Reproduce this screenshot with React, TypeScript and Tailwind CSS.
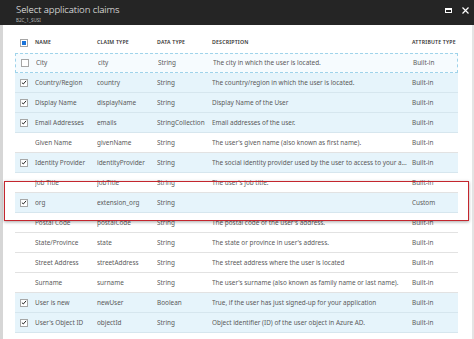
import React from "react";

type Row = { name: string; claim: string; type: string; desc: string; attr: string; checked: boolean; focus?: boolean };

const rows: Row[] = [
  { name: "City", claim: "city", type: "String", desc: "The city in which the user is located.", attr: "Built-in", checked: false, focus: true },
  { name: "Country/Region", claim: "country", type: "String", desc: "The country/region in which the user is located.", attr: "Built-in", checked: true },
  { name: "Display Name", claim: "displayName", type: "String", desc: "Display Name of the User", attr: "Built-in", checked: true },
  { name: "Email Addresses", claim: "emails", type: "StringCollection", desc: "Email addresses of the user.", attr: "Built-in", checked: true },
  { name: "Given Name", claim: "givenName", type: "String", desc: "The user's given name (also known as first name).", attr: "Built-in", checked: false },
  { name: "Identity Provider", claim: "identityProvider", type: "String", desc: "The social identity provider used by the user to access to your a...", attr: "Built-in", checked: true },
  { name: "Job Title", claim: "jobTitle", type: "String", desc: "The user's job title.", attr: "Built-in", checked: false },
  { name: "org", claim: "extension_org", type: "String", desc: "", attr: "Custom", checked: true },
  { name: "Postal Code", claim: "postalCode", type: "String", desc: "The postal code of the user's address.", attr: "Built-in", checked: false },
  { name: "State/Province", claim: "state", type: "String", desc: "The state or province in user's address.", attr: "Built-in", checked: false },
  { name: "Street Address", claim: "streetAddress", type: "String", desc: "The street address where the user is located", attr: "Built-in", checked: false },
  { name: "Surname", claim: "surname", type: "String", desc: "The user's surname (also known as family name or last name).", attr: "Built-in", checked: false },
  { name: "User is new", claim: "newUser", type: "Boolean", desc: "True, if the user has just signed-up for your application", attr: "Built-in", checked: true },
  { name: "User's Object ID", claim: "objectId", type: "String", desc: "Object identifier (ID) of the user object in Azure AD.", attr: "Built-in", checked: true },
];

function Check({ checked }: { checked: boolean }) {
  return (
    <div className="w-[8px] h-[8px] border border-[#a6a6a6] bg-white flex items-center justify-center">
      {checked && (
        <svg width="7" height="7" viewBox="0 0 8 8">
          <polyline points="1.2,4.2 3.1,6 6.8,1.8" fill="none" stroke="#222" strokeWidth="1.3" />
        </svg>
      )}
    </div>
  );
}

export default function App() {
  return (
    <div className="relative w-[474px] h-[339px] overflow-hidden bg-white flex flex-col" style={{ fontFamily: '"Noto Sans", "Open Sans", sans-serif' }}>
      <div className="h-[25px] bg-[#252525] flex items-start justify-between pl-[16px] pr-[5px] shrink-0">
        <div className="flex flex-col pt-[4px]">
          <div className="text-[9.6px] leading-[12px] text-[#f0f0f0] font-light tracking-[-0.1px]">Select application claims</div>
          <div className="text-[4.5px] leading-[6px] text-[#bbbbbb] mt-[1px]">B2C_1_SUSI</div>
        </div>
        <div className="flex items-center gap-[10px] pt-[7px]">
          <div className="w-[7px] h-[5px] border border-white border-t-[2px]" />
          <svg width="7" height="7" viewBox="0 0 7 7">
            <path d="M0.5 0.5 L6.5 6.5 M6.5 0.5 L0.5 6.5" stroke="#fff" strokeWidth="1.2" />
          </svg>
        </div>
      </div>
      <div className="flex flex-1">
        <div className="w-[3px] bg-[#d6d6d6] shrink-0" />
        <div className="flex-1 pl-[12px] pr-[14px] pt-[8px] text-[6.4px] text-[#5a5a5a]">
          <div className="h-[20px] flex items-center text-[5.2px] font-semibold text-[#333] tracking-[0.2px]">
            <div className="w-[20px] pl-[5px]">
              <div className="w-[8px] h-[8px] border border-[#a6a6a6] bg-white flex items-center justify-center">
                <div className="w-[4px] h-[4px] bg-[#1a73d9]" />
              </div>
            </div>
            <div className="w-[62px]">NAME</div>
            <div className="w-[60px]">CLAIM TYPE</div>
            <div className="w-[55px]">DATA TYPE</div>
            <div className="w-[200px]">DESCRIPTION</div>
            <div className="flex-1">ATTRIBUTE TYPE</div>
          </div>
          {rows.map((r) => (
            <div
              key={r.name}
              className={
                "h-[20px] flex items-center whitespace-nowrap " +
                (r.focus
                  ? "border border-dashed border-[#9fd3ea] bg-[#f6fbfe]"
                  : r.checked
                  ? "bg-[#e6f4fb] border-b border-[#d6e6ee]"
                  : "bg-white border-b border-[#e2e2e2]")
              }
            >
              <div className="w-[20px] pl-[5px]">
                {(r.checked || r.focus) && <Check checked={r.checked} />}
              </div>
              <div className="w-[62px] overflow-hidden">{r.name}</div>
              <div className="w-[60px] overflow-hidden">{r.claim}</div>
              <div className="w-[55px] overflow-hidden">{r.type}</div>
              <div className="w-[200px] pr-[4px] overflow-hidden">{r.desc}</div>
              <div className="flex-1">{r.attr}</div>
            </div>
          ))}
        </div>
        <div className="w-[2px] bg-[#e4e4e4] shrink-0" />
      </div>
      <div className="absolute left-[4px] top-[181px] w-[465px] h-[40px] border-[1.5px] border-[#c4262e] shadow-[0_1px_3px_rgba(0,0,0,0.35)] pointer-events-none" />
    </div>
  );
}
